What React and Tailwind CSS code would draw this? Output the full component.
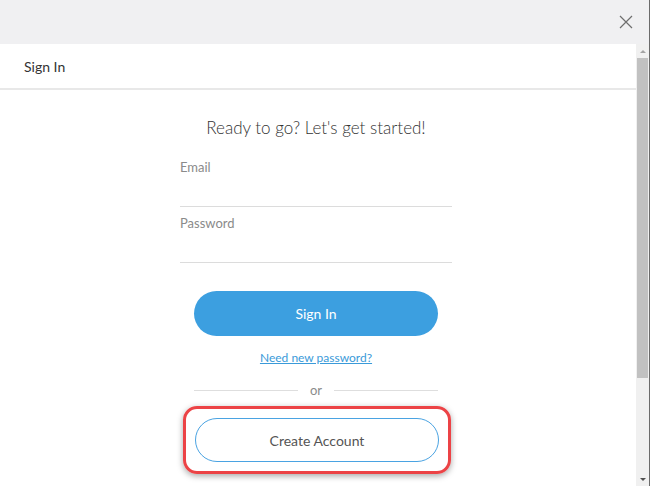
import React from 'react'

const Field = ({ label }) => (
    <div className="w-[272px]">
        <div className="text-[13px] leading-4 text-[#8a8a8a]">{label}</div>
        <div className="h-[32px] border-b border-[#dcdcdc]"></div>
    </div>
)

const App = () => {
    return (
        <div className="w-[650px] h-[486px] flex flex-col bg-white overflow-hidden border-r border-[#6b6b6b]" style={{ fontFamily: "Lato, 'Open Sans', sans-serif" }}>
            <div className="h-[44px] shrink-0 bg-[#f0f0f2] flex items-center justify-end pr-[16px]">
                <svg width="14" height="14" viewBox="0 0 14 14" className="text-[#6e6e6e]">
                    <path d="M1 1L13 13M13 1L1 13" stroke="currentColor" strokeWidth="1.2" fill="none" />
                </svg>
            </div>
            <div className="flex flex-1 min-h-0">
                <div className="flex-1 flex flex-col pr-[4px]">
                    <div className="h-[46px] shrink-0 flex items-center pl-[24px] border-b-2 border-[#e8e8e8] text-[14px] text-[#333] -mr-[4px]">
                        Sign In
                    </div>
                    <div className="flex flex-col items-center">
                        <h1 className="mt-[27px] text-[17px] leading-[22px] font-light text-[#333]">Ready to go? Let's get started!</h1>
                        <div className="mt-[20px]">
                            <Field label="Email" />
                        </div>
                        <div className="mt-[8px]">
                            <Field label="Password" />
                        </div>
                        <button className="mt-[28px] w-[244px] h-[45px] rounded-full bg-[#3c9fe0] text-white text-[14px]">
                            Sign In
                        </button>
                        <a href="#" className="mt-[14px] text-[12px] leading-4 text-[#3a9ad9] underline">Need new password?</a>
                        <div className="mt-[16px] w-[244px] flex items-center gap-[12px]">
                            <div className="flex-1 h-px bg-[#dedede]"></div>
                            <span className="text-[13px] leading-4 text-[#8a8a8a]">or</span>
                            <div className="flex-1 h-px bg-[#dedede]"></div>
                        </div>
                        <div className="mt-[8px] ml-[2px] p-[9px] rounded-[14px] border-[3px] border-[#ec4346] shadow-[0_2px_6px_rgba(0,0,0,0.35)]">
                            <button className="w-[244px] h-[44px] rounded-full border border-[#4aa3e2] bg-white text-[14px] text-[#555]">
                                Create Account
                            </button>
                        </div>
                    </div>
                </div>
                <div className="w-[13px] shrink-0 bg-[#f0f0f0] flex flex-col items-center">
                    <div className="h-[14px] flex items-center justify-center">
                        <div className="w-0 h-0 border-l-[3px] border-r-[3px] border-b-[3px] border-l-transparent border-r-transparent border-b-[#a3a3a3]"></div>
                    </div>
                    <div className="w-[11px] h-[320px] bg-[#c1c1c1]"></div>
                    <div className="flex-1"></div>
                    <div className="h-[14px] flex items-center justify-center">
                        <div className="w-0 h-0 border-l-[3px] border-r-[3px] border-t-[3px] border-l-transparent border-r-transparent border-t-[#505050]"></div>
                    </div>
                </div>
            </div>
        </div>
    )
}

export default App
